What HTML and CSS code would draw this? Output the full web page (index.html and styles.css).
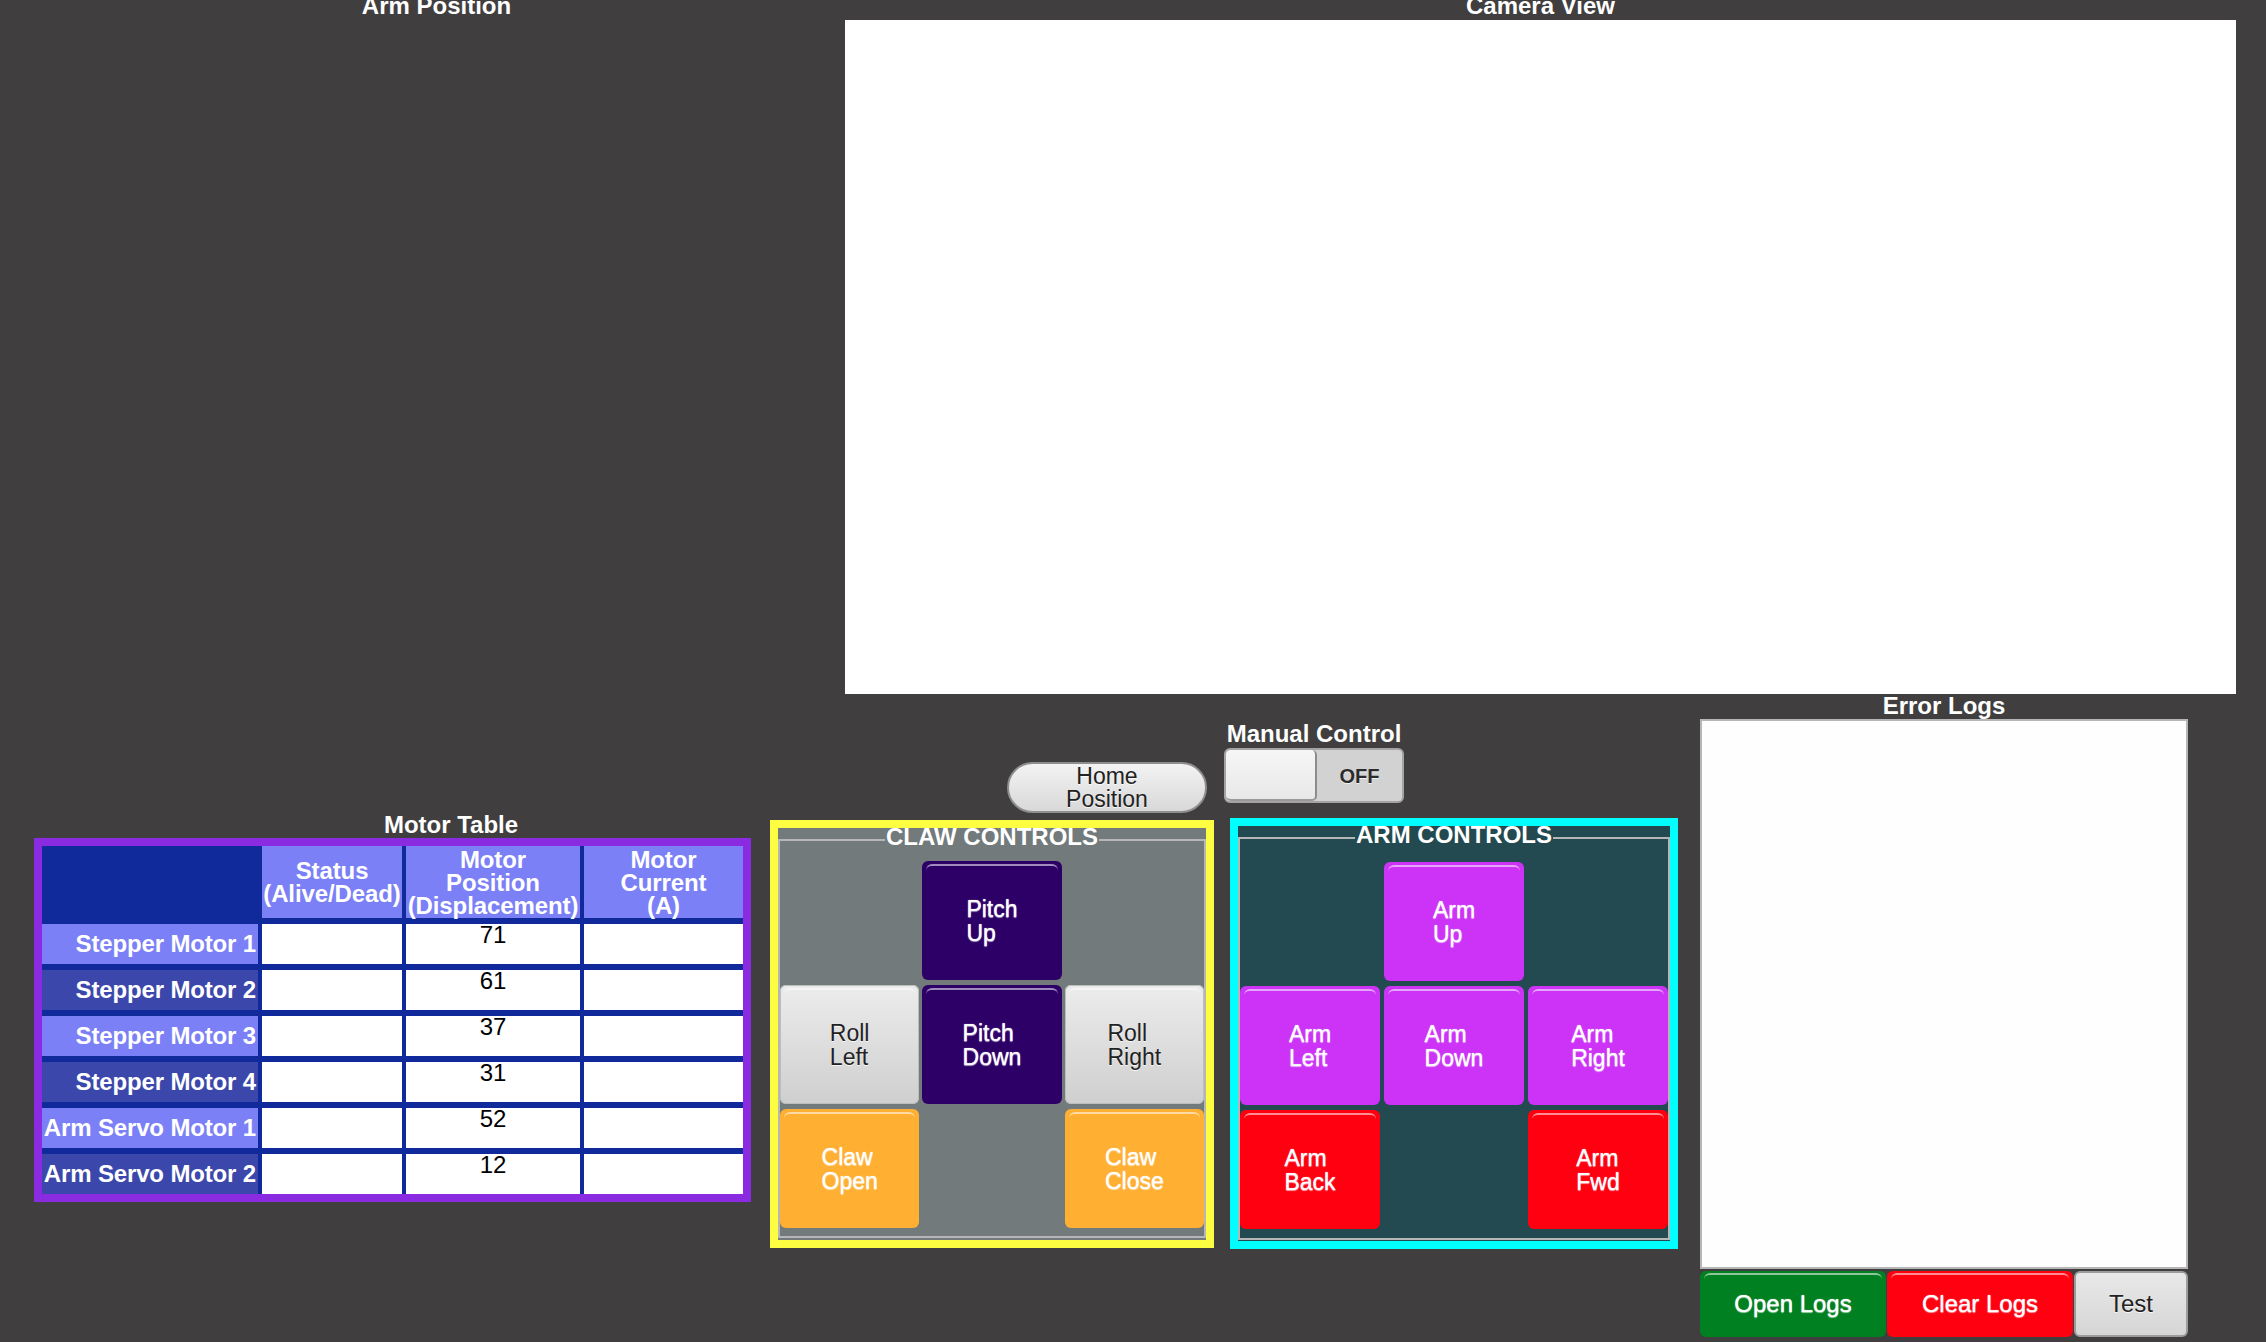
FILE: index.html
```html
<!DOCTYPE html>
<html lang="en">
<head>
<meta charset="utf-8">
<title>Robot Arm Control</title>
<link rel="stylesheet" href="styles.css">
</head>
<body>
<div class="top-row">
  <section class="arm-pos">
    <h2 class="label arm-pos-label">Arm Position</h2>
  </section>
  <section class="camera">
    <h2 class="label">Camera View</h2>
    <div class="camera-view"></div>
  </section>
</div>

<div class="bottom-row">
  <section class="motor-col">
    <h2 class="label motor-label">Motor Table</h2>
    <div class="motor-table">
      <div class="corner"></div>
      <div class="head">Status<br>(Alive/Dead)</div>
      <div class="head">Motor<br>Position<br>(Displacement)</div>
      <div class="head">Motor<br>Current<br>(A)</div>

      <div class="name light">Stepper Motor 1</div>
      <div class="val"></div><div class="val">71</div><div class="val"></div>

      <div class="name mid">Stepper Motor 2</div>
      <div class="val"></div><div class="val">61</div><div class="val"></div>

      <div class="name light">Stepper Motor 3</div>
      <div class="val"></div><div class="val">37</div><div class="val"></div>

      <div class="name mid">Stepper Motor 4</div>
      <div class="val"></div><div class="val">31</div><div class="val"></div>

      <div class="name light">Arm Servo Motor 1</div>
      <div class="val"></div><div class="val">52</div><div class="val"></div>

      <div class="name mid">Arm Servo Motor 2</div>
      <div class="val"></div><div class="val">12</div><div class="val"></div>
    </div>
  </section>

  <section class="claw-col">
    <button class="home-btn">Home<br>Position</button>
    <div class="ctrl-box claw-box">
      <fieldset class="ctrl-set claw-set">
        <legend>CLAW CONTROLS</legend>
        <div class="pad-grid claw-grid">
          <span></span>
          <button class="pad-btn pitch"><span>Pitch<br>Up</span></button>
          <span></span>
          <button class="pad-btn roll"><span>Roll<br>Left</span></button>
          <button class="pad-btn pitch"><span>Pitch<br>Down</span></button>
          <button class="pad-btn roll"><span>Roll<br>Right</span></button>
          <button class="pad-btn claw"><span>Claw<br>Open</span></button>
          <span></span>
          <button class="pad-btn claw"><span>Claw<br>Close</span></button>
        </div>
      </fieldset>
    </div>
  </section>

  <section class="arm-col">
    <div class="manual">
      <h2 class="label">Manual Control</h2>
      <div class="toggle"><span class="knob"></span><span class="toggle-text">OFF</span></div>
    </div>
    <div class="ctrl-box arm-box">
      <fieldset class="ctrl-set arm-set">
        <legend>ARM CONTROLS</legend>
        <div class="pad-grid arm-grid">
          <span></span>
          <button class="pad-btn arm"><span>Arm<br>Up</span></button>
          <span></span>
          <button class="pad-btn arm"><span>Arm<br>Left</span></button>
          <button class="pad-btn arm"><span>Arm<br>Down</span></button>
          <button class="pad-btn arm"><span>Arm<br>Right</span></button>
          <button class="pad-btn red"><span>Arm<br>Back</span></button>
          <span></span>
          <button class="pad-btn red"><span>Arm<br>Fwd</span></button>
        </div>
      </fieldset>
    </div>
  </section>

  <section class="log-col">
    <h2 class="label">Error Logs</h2>
    <div class="log-box"></div>
    <div class="log-actions">
      <button class="log-btn open">Open Logs</button>
      <button class="log-btn clear">Clear Logs</button>
      <button class="log-btn test">Test</button>
    </div>
  </section>
</div>
</body>
</html>
```

FILE: styles.css
```css
html, body {
  margin: 0;
  padding: 0;
}

body {
  width: 2266px;
  height: 1342px;
  overflow: hidden;
  background: #403e3f;
  font-family: "Liberation Sans", Arial, sans-serif;
  color: #fff;
}

.label {
  margin: 0;
  font: bold 24px/24px "Liberation Sans", Arial, sans-serif;
  color: #fff;
  text-align: center;
  white-space: nowrap;
}

/* ---------- top row ---------- */
.top-row {
  display: flex;
  margin-top: -6px;
}

.arm-pos {
  width: 845px;
}

.arm-pos-label {
  padding-left: 28px;
}

.camera {
  width: 1391px;
}

.camera-view {
  margin-top: 2px;
  height: 674px;
  background: #ffffff;
}

/* ---------- bottom row ---------- */
.bottom-row {
  display: flex;
  align-items: flex-start;
  padding-left: 34px;
}

/* motor table */
.motor-col {
  width: 717px;
  margin-top: 119px;
}

.motor-label {
  padding-left: 117px;
  margin-bottom: 1px;
}

.motor-table {
  box-sizing: border-box;
  width: 717px;
  border: 8px solid #8a2be2;
  background: #10299b;
  display: grid;
  grid-template-columns: 216px 140px 174px 159px;
  grid-template-rows: 72px repeat(6, 40px);
  column-gap: 4px;
  row-gap: 6px;
}

.head {
  background: #7b80f6;
  color: #fff;
  font: bold 24px/23px "Liberation Sans", Arial, sans-serif;
  text-align: center;
  white-space: nowrap;
  letter-spacing: -0.1px;
  display: flex;
  flex-direction: column;
  justify-content: center;
}

.name {
  display: flex;
  align-items: center;
  justify-content: flex-end;
  padding-right: 2px;
  font: bold 24px/24px "Liberation Sans", Arial, sans-serif;
  color: #fff;
  white-space: nowrap;
  letter-spacing: -0.15px;
}

.name.light {
  background: #7b80f6;
}

.name.mid {
  background: #3b47ab;
}

.val {
  background: #ffffff;
  color: #000;
  font: 24px/22px "Liberation Sans", Arial, sans-serif;
  text-align: center;
}

/* claw column */
.claw-col {
  width: 444px;
  margin-left: 19px;
  margin-top: 68px;
  display: flex;
  flex-direction: column;
}

.home-btn {
  align-self: flex-end;
  margin-right: 7px;
  width: 200px;
  height: 51px;
  box-sizing: border-box;
  border: 2px solid #8e8e8e;
  border-radius: 26px;
  background: linear-gradient(#f3f3f3, #d8d8d8);
  color: #222;
  font: 23px/23px "Liberation Sans", Arial, sans-serif;
  padding: 0;
  text-shadow: 0 1px 0 rgba(255,255,255,0.8);
}

.ctrl-box {
  box-sizing: border-box;
  border: 8px solid;
}

.claw-box {
  margin-top: 7px;
  width: 444px;
  border-color: #fdfd42;
  background: #727a7b;
}

.ctrl-set {
  margin: 0;
  border: 2px solid #b6b6b6;
  min-width: 0;
}

.claw-set {
  padding: 9px 0 8px;
  margin-bottom: 2px;
}

.ctrl-set legend {
  margin: 0 auto;
  padding: 0 1px 6px;
  font: bold 24px/18px "Liberation Sans", Arial, sans-serif;
  color: #fff;
  white-space: nowrap;
}

.pad-grid {
  display: grid;
  grid-template-columns: repeat(3, 1fr);
  grid-template-rows: repeat(3, 119px);
  row-gap: 5px;
}

.claw-grid {
  column-gap: 3px;
}

.arm-grid {
  column-gap: 4px;
}

.pad-btn {
  position: relative;
  border: 0;
  border-radius: 6px;
  padding: 0;
  margin: 0;
  color: #fff;
  font: 23px/24px "Liberation Sans", Arial, sans-serif;
  text-shadow: 0 1px 1px rgba(255,255,255,0.6), 0 0 1px rgba(255,255,255,0.7);
}

.pad-btn::before {
  content: "";
  position: absolute;
  left: 4px;
  right: 4px;
  top: 3px;
  height: 8px;
  border-top: 2px solid rgba(255,255,255,0.55);
  border-radius: 6px 6px 0 0;
  pointer-events: none;
}

.pad-btn span {
  display: inline-block;
  text-align: left;
}

.pitch {
  background: #2d0068;
}

.roll {
  background: linear-gradient(#ececec, #cfcfcf);
  color: #222;
  box-shadow: inset 0 0 0 1px #bdbdbd;
  text-shadow: 0 1px 0 rgba(255,255,255,0.8);
}

.claw {
  background: #ffb033;
}

.arm {
  background: #cc33f7;
}

.red {
  background: #ff0010;
}

/* arm column */
.arm-col {
  width: 454px;
  margin-left: 10px;
  margin-top: 28px;
}

.manual {
  width: 180px;
}

.toggle {
  margin-top: 2px;
  box-sizing: border-box;
  width: 180px;
  height: 55px;
  display: flex;
  border: 2px solid #a4a4a4;
  border-radius: 6px;
  background: #d2d2d2;
  overflow: hidden;
}

.knob {
  box-sizing: border-box;
  width: 91px;
  height: 100%;
  background: linear-gradient(#f6f6f6, #e8e8e8);
  border-right: 2px solid #8c8c8c;
  border-bottom: 2px solid #9a9a9a;
  border-radius: 5px;
}

.toggle-text {
  flex: 1;
  display: flex;
  align-items: center;
  justify-content: center;
  font: bold 20px/20px "Liberation Sans", Arial, sans-serif;
  color: #2b2b2b;
  text-shadow: 0 1px 0 rgba(255,255,255,0.7);
}

.arm-box {
  margin-top: 15px;
  margin-left: 6px;
  width: 448px;
  border-color: #00ffff;
  background: #234a50;
}

.arm-set {
  padding: 12px 0 9px;
  margin-bottom: 1px;
}

/* log column */
.log-col {
  width: 488px;
  margin-left: 22px;
}

.log-box {
  margin-top: 1px;
  box-sizing: border-box;
  height: 550px;
  border: 2px solid #b6b6b6;
  background: #fefefe;
}

.log-actions {
  margin-top: 2px;
  display: flex;
  gap: 1px;
}

.log-btn {
  position: relative;
  height: 66px;
  border: 0;
  border-radius: 6px;
  padding: 0;
  color: #fff;
  font: 24px/24px "Liberation Sans", Arial, sans-serif;
  text-shadow: 0 1px 1px rgba(255,255,255,0.6), 0 0 1px rgba(255,255,255,0.7);
}

.log-btn.open,
.log-btn.clear {
  width: 186px;
}

.log-btn.open::before,
.log-btn.clear::before {
  content: "";
  position: absolute;
  left: 4px;
  right: 4px;
  top: 2px;
  height: 8px;
  border-top: 2px solid rgba(255,255,255,0.55);
  border-radius: 6px 6px 0 0;
}

.open {
  width: 185px;
  background: #008020;
}

.clear {
  background: #ff0010;
}

.test {
  width: 114px;
  box-sizing: border-box;
  border: 2px solid #9c9c9c;
  background: linear-gradient(#e8e8e8, #d6d6d6);
  color: #222;
  text-shadow: 0 1px 0 rgba(255,255,255,0.8);
}
```
